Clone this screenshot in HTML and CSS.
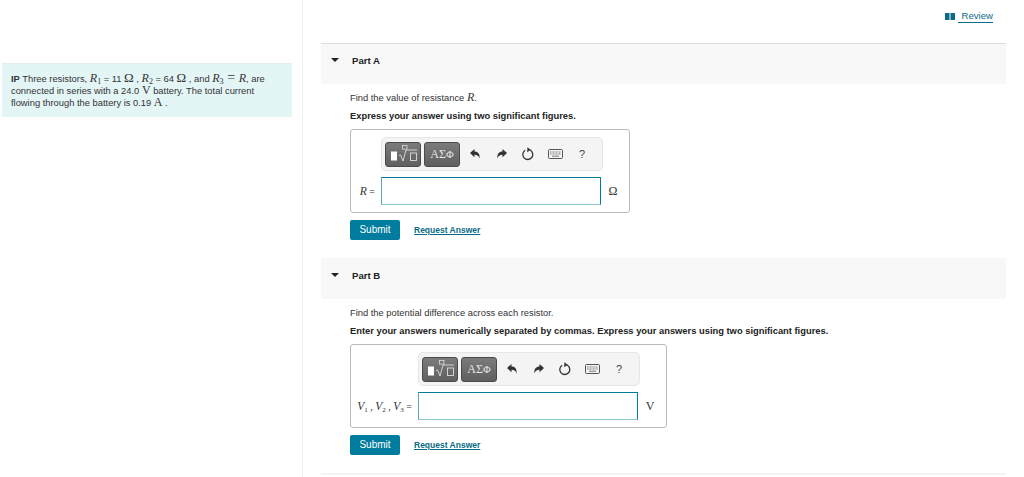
FILE: index.html
```html
<!DOCTYPE html>
<html lang="en">
<head>
<meta charset="utf-8">
<title>Three resistors</title>
<link rel="stylesheet" href="styles.css">
</head>
<body>
<svg class="defs" width="0" height="0" aria-hidden="true">
  <symbol id="i-undo" viewBox="0 0 12 12"><path d="M1 5 L5.5 1 V3.6 C8.8 3.6 11 5.6 10.6 10.6 C9.8 8 8.2 6.8 5.5 6.8 V9.2 Z" fill="currentColor"/></symbol>
  <symbol id="i-redo" viewBox="0 0 12 12"><path d="M11 5 L6.5 1 V3.6 C3.2 3.6 1 5.6 1.4 10.6 C2.2 8 3.8 6.8 6.5 6.8 V9.2 Z" fill="currentColor"/></symbol>
  <symbol id="i-reload" viewBox="0 0 14 14"><path d="M9 3 A5 5 0 1 1 4.2 3.2" fill="none" stroke="currentColor" stroke-width="1.3"/><path d="M6.4 .2 L9.8 2.8 L6.2 5.2 Z" fill="currentColor"/></symbol>
  <symbol id="i-keys" viewBox="0 0 15 10"><rect x=".5" y=".5" width="14" height="9" rx="1" fill="#f4f4f4" stroke="#555"/><path d="M2 3h11M2 5h11" stroke="#777" stroke-dasharray="1 .5" fill="none"/><path d="M4 7.2h7" stroke="#777" fill="none"/></symbol>
  <symbol id="i-templates" viewBox="0 0 30 18"><rect x="3" y="6.5" width="6" height="9" fill="#fff"/><path d="M11 10.5 L12.6 10 L15 16 L18 5 H29" fill="none" stroke="#ddd" stroke-width=".9"/><rect x="14.5" y=".5" width="4.5" height="3.6" fill="none" stroke="#ddd" stroke-width=".8"/><rect x="22.5" y="8" width="6" height="7.5" fill="none" stroke="#ddd" stroke-width=".9"/></symbol>
</svg>
<div class="page">
  <aside class="side">
    <div class="intro">
      <p><b>IP</b> Three resistors, <span class="m">R</span><sub class="s">1</sub> = 11 <span class="u">Ω</span> , <span class="m">R</span><sub class="s">2</sub> = 64 <span class="u">Ω</span> , and <span class="m big">R</span><sub class="s">3</sub> <span class="u eq">=</span> <span class="m big">R</span>, are connected in series with a 24.0 <span class="u big">V</span> battery. The total current flowing through the battery is 0.19 <span class="u big">A</span> .</p>
    </div>
  </aside>
  <main class="main">
    <div class="review-row">
      <a class="review" href="#"><svg class="book" viewBox="0 0 10 7" width="10" height="7" aria-hidden="true"><path d="M0 0H4.5V7H0ZM5.5 0H10V7H5.5Z" fill="#0b6a86"/></svg> <span class="review-text">Review</span></a>
    </div>

    <section class="part part-a">
      <header class="part-head"><span class="caret"></span><h2>Part A</h2></header>
      <div class="part-body">
        <p class="q">Find the value of resistance <span class="m big">R</span>.</p>
        <p class="ins">Express your answer using two significant figures.</p>
        <div class="answer answer-a">
          <div class="toolbar">
            <span class="tbtn"><svg width="30" height="18"><use href="#i-templates"/></svg></span>
            <span class="tbtn greek">ΑΣ<span class="phi">Φ</span></span>
            <svg class="ti i1" width="12" height="12"><use href="#i-undo"/></svg>
            <svg class="ti" width="12" height="12"><use href="#i-redo"/></svg>
            <svg class="ti i3" width="14" height="14"><use href="#i-reload"/></svg>
            <svg class="ti i4" width="15" height="10"><use href="#i-keys"/></svg>
            <span class="help">?</span>
          </div>
          <div class="lab"><span class="m big">R</span> =</div>
          <div class="field"></div>
          <div class="unit">Ω</div>
        </div>
        <div class="actions"><a class="submit" href="#">Submit</a><a class="req" href="#">Request Answer</a></div>
      </div>
    </section>

    <section class="part part-b">
      <header class="part-head"><span class="caret"></span><h2>Part B</h2></header>
      <div class="part-body">
        <p class="q">Find the potential difference across each resistor.</p>
        <p class="ins">Enter your answers numerically separated by commas. Express your answers using two significant figures.</p>
        <div class="answer answer-b">
          <div class="toolbar">
            <span class="tbtn"><svg width="30" height="18"><use href="#i-templates"/></svg></span>
            <span class="tbtn greek">ΑΣ<span class="phi">Φ</span></span>
            <svg class="ti i1" width="12" height="12"><use href="#i-undo"/></svg>
            <svg class="ti" width="12" height="12"><use href="#i-redo"/></svg>
            <svg class="ti i3" width="14" height="14"><use href="#i-reload"/></svg>
            <svg class="ti i4" width="15" height="10"><use href="#i-keys"/></svg>
            <span class="help">?</span>
          </div>
          <div class="lab"><span class="m big">V</span><sub class="s">1</sub> , <span class="m big">V</span><sub class="s">2</sub> , <span class="m big">V</span><sub class="s">3</sub> =</div>
          <div class="field"></div>
          <div class="unit">V</div>
        </div>
        <div class="actions"><a class="submit" href="#">Submit</a><a class="req" href="#">Request Answer</a></div>
      </div>
    </section>
  </main>
</div>
</body>
</html>
```
FILE: styles.css
```css
* { box-sizing: border-box; }
html, body { margin: 0; height: 100%; overflow: hidden; background: #fff; }
body { font-family: "Liberation Sans", Arial, sans-serif; font-size: 9.35px; color: #333; }
.defs { position: absolute; }
p { margin: 0; }
.page { display: flex; height: 477px; }
.side { width: 303px; flex: none; padding: 63px 10px 0 2px; border-right: 1px solid #f0f0f0; }
.intro { background: #e4f5f6; border-top: 1px solid #e4eeee; height: 54px; padding: 9px 19px 0 9px; line-height: 12px; font-size: 9.35px; }
.intro b { font-weight: 700; }
.m { font-family: "Liberation Serif", serif; font-style: italic; font-size: 12px; line-height: 0; }
.u { font-family: "Liberation Serif", serif; font-size: 13px; line-height: 0; }
.big { font-size: 12px; }
.eq { font-size: 14px; margin: 0 1px; }
.s { font-size: 8px; line-height: 0; vertical-align: -2px; font-family: "Liberation Serif", serif; }
.main { width: 703px; padding-left: 18px; flex: none; }
.review-row { height: 43px; display: flex; justify-content: flex-end; padding: 10px 13px 0 0; }
.review { color: #0b6a86; font-size: 9.6px; line-height: 12px; display: flex; align-items: center; gap: 4px; height: 13px; text-decoration: none; border-bottom: 1px solid #0b6a86; }
.book { margin-left: -13px; margin-right: 3px; }
.part-head { height: 41px; background: #f8f8f8; border-top: 1px solid #ddd; display: flex; align-items: flex-start; padding: 11px 0 0 10px; }
.part-b .part-head { border-top-color: #f8f8f8; }
.part-head h2 { margin: 0 0 0 13px; font-size: 9.6px; line-height: 12px; font-weight: 700; color: #222; }
.caret { width: 0; height: 0; margin-top: 3px; border-left: 4px solid transparent; border-right: 4px solid transparent; border-top: 4px solid #222; }
.part-body { padding: 8px 0 0 29px; }
.q { line-height: 13px; height: 18px; }
.ins { font-weight: 700; line-height: 13px; color: #222; }
.answer { display: grid; align-items: center; margin-top: 6px; height: 84px; padding-top: 7px; border: 1px solid #bbb; border-radius: 3px; row-gap: 6px; grid-auto-rows: min-content; align-content: start; }
.answer-a { width: 280px; grid-template-columns: 30px 220px 1fr; }
.answer-b { width: 317px; grid-template-columns: 67px 220px 1fr; }
.toolbar { grid-column: 2; grid-row: 1; width: 222px; height: 34px; background: #f4f4f4; border: 1px solid #e6e6e6; border-radius: 5px; display: flex; align-items: center; padding: 0 0 0 3px; color: #333; }
.tbtn { width: 36px; height: 25px; margin-right: 3px; border-radius: 3px; background: linear-gradient(#7b7b7b, #5f5f5f); border: 1px solid #4b4b4b; display: flex; align-items: center; justify-content: center; color: #e6e6e6; }
.greek { font-family: "Liberation Serif", serif; font-size: 12px; }
.phi { font-size: 10.5px; }
.ti { flex: none; margin-left: 15px; }
.i1 { margin-left: 6px; }
.i3 { margin-left: 13px; }
.i4 { margin-left: 12.5px; }
.help { margin-left: 16.5px; font-size: 11px; color: #444; }
.lab { grid-column: 1; grid-row: 2; text-align: right; padding-right: 6px; font-family: "Liberation Serif", serif; font-size: 10px; white-space: nowrap; }
.lab .s { font-size: 7px; }
.lab .big { font-size: 11.5px; }
.field { grid-column: 2; grid-row: 2; height: 28px; background: #fff; border: 1px solid #8fc4d2; border-top-color: #007c9e; border-right-color: #007c9e; border-left-color: #5ba8bd; }
.unit { grid-column: 3; grid-row: 2; text-align: center; font-family: "Liberation Serif", serif; font-size: 12px; padding-right: 4px; }
.actions { display: flex; align-items: center; margin-top: 6px; height: 21px; }
.submit { width: 50px; height: 20px; background: #007c9e; color: #fff; border-radius: 2px; text-align: center; line-height: 20px; font-size: 10px; text-decoration: none; }
.req { margin-left: 14px; color: #0b6a86; font-weight: 700; font-size: 8.5px; text-decoration: underline; }
.part-a { height: 215px; }
.part-b { height: 217px; border-bottom: 2px solid #f4f4f4; }
```
